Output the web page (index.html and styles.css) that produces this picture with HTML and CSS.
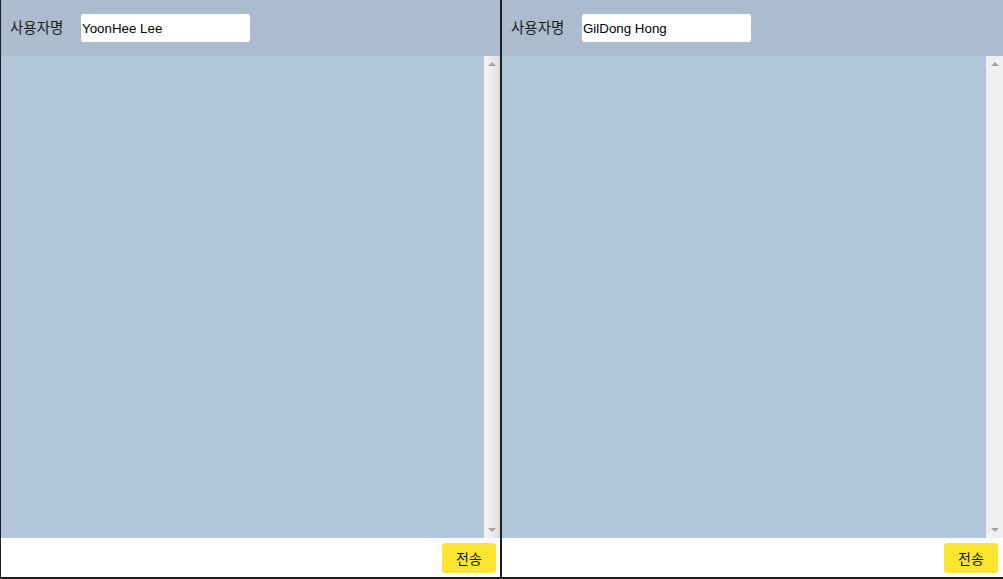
FILE: index.html
```html
<!DOCTYPE html>
<html lang="ko">
<head>
<meta charset="utf-8">
<title>Chat</title>
<link rel="stylesheet" href="styles.css">
</head>
<body>
<div class="desk">
  <section class="chat chat-left">
    <header class="chat-head">
      <label class="name-label">사용자명</label>
      <input class="name-input" type="text" value="YoonHee Lee">
    </header>
    <div class="chat-body">
      <div class="messages"></div>
      <div class="scrollbar scrollbar-shaded">
        <span class="arrow arrow-up"></span>
        <span class="track"></span>
        <span class="arrow arrow-down"></span>
      </div>
    </div>
    <footer class="chat-foot">
      <button class="send-btn">전송</button>
    </footer>
  </section>
  <section class="chat chat-right">
    <header class="chat-head">
      <label class="name-label">사용자명</label>
      <input class="name-input" type="text" value="GilDong Hong">
    </header>
    <div class="chat-body">
      <div class="messages"></div>
      <div class="scrollbar">
        <span class="arrow arrow-up"></span>
        <span class="track"></span>
        <span class="arrow arrow-down"></span>
      </div>
    </div>
    <footer class="chat-foot">
      <button class="send-btn">전송</button>
    </footer>
  </section>
</div>
</body>
</html>
```
FILE: styles.css
```css
* { box-sizing: border-box; }
html, body {
  margin: 0;
  padding: 0;
  width: 1003px;
  height: 579px;
  overflow: hidden;
  background: #1c1c1c;
  font-family: "Noto Sans CJK KR", "Liberation Sans", sans-serif;
}
.desk {
  display: flex;
  height: 577px;
}
.chat {
  display: flex;
  flex-direction: column;
  height: 577px;
  background: #ffffff;
}
.chat-left {
  width: 501px;
  border-left: 1px solid #1e1e1e;
  border-right: 1px solid #1e1e1e;
}
.chat-right {
  width: 502px;
  border-left: 1px solid #1e1e1e;
}
.chat-head {
  height: 56px;
  flex: none;
  background: #aabccd;
  display: flex;
  align-items: center;
  padding-left: 9px;
}
.name-label {
  font-family: "Noto Sans CJK KR", sans-serif;
  font-size: 14.5px;
  color: #1b1b1b;
  width: 71px;
  flex: none;
  line-height: 1;
  position: relative;
  top: -1px;
}
.name-input {
  width: 169px;
  height: 28px;
  border: none;
  border-radius: 3px;
  background: #ffffff;
  padding: 0 0 0 1px;
  margin: 0;
  font-family: "Liberation Sans", Arial, sans-serif;
  font-size: 13.33px;
  color: #000;
  outline: none;
}
.chat-body {
  flex: 1;
  display: flex;
  background: #b2c6da;
  min-height: 0;
}
.messages {
  flex: 1;
}
.scrollbar {
  width: 17px;
  flex: none;
  display: flex;
  flex-direction: column;
  align-items: center;
  background: #f0f0f0;
}
.scrollbar-shaded {
  width: 16px;
  background: linear-gradient(to right, #f2f2f2 0%, #ececec 55%, #d9d9d9 100%);
}
.track { flex: 1; }
.arrow {
  width: 0;
  height: 0;
  border-left: 4px solid transparent;
  border-right: 4px solid transparent;
}
.arrow-up {
  margin-top: 6px;
  margin-bottom: 6px;
  border-bottom: 4px solid #a3a3a3;
}
.arrow-down {
  margin-top: 6px;
  margin-bottom: 6px;
  border-top: 4px solid #a3a3a3;
}
.chat-foot {
  height: 39px;
  flex: none;
  background: #ffffff;
  display: flex;
  justify-content: flex-end;
  align-items: flex-start;
  padding: 5px 5px 0 0;
}
.chat-left .chat-foot { padding-right: 4px; }
.send-btn {
  width: 54px;
  height: 30px;
  border: none;
  border-radius: 3px;
  background: #fbe52e;
  font-family: "Noto Sans CJK KR", sans-serif;
  font-size: 14px;
  color: #111;
  padding: 0;
  margin: 0;
  line-height: 1;
}
```
